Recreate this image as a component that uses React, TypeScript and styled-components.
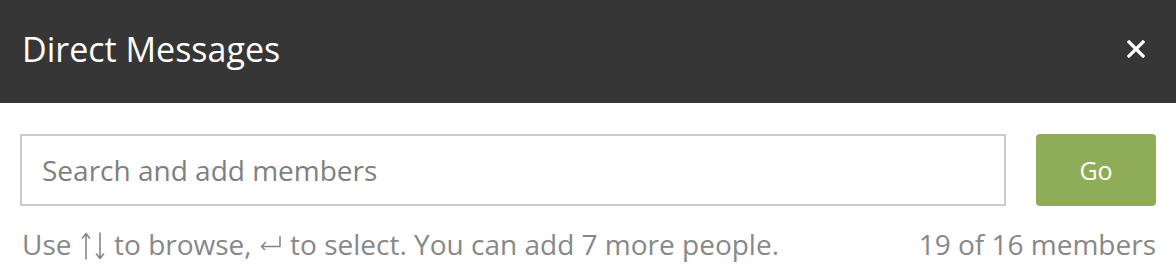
import React from 'react';
import styled, { createGlobalStyle } from 'styled-components';

const GlobalStyle = createGlobalStyle`
  html, body {
    margin: 0;
    padding: 0;
    background: #ffffff;
    font-family: "Open Sans", "Noto Sans", sans-serif;
  }
`;

const Modal = styled.div`
  width: 1176px;
  height: 278px;
  display: flex;
  flex-direction: column;
  background: #ffffff;
  overflow: hidden;
`;

const Header = styled.header`
  height: 103px;
  box-sizing: border-box;
  padding: 0 31px 5px 22px;
  display: flex;
  align-items: center;
  justify-content: space-between;
  background: #363636;
`;

const Title = styled.h1`
  margin: 0;
  font-size: 34px;
  font-weight: 400;
  color: #ffffff;
`;

const CloseButton = styled.button`
  width: 18px;
  height: 18px;
  padding: 0;
  border: 0;
  background: none;
  cursor: pointer;
  display: flex;
`;

const Body = styled.div`
  padding: 31px 20px 0 20px;
  display: flex;
  flex-direction: column;
`;

const SearchRow = styled.div`
  display: flex;
  gap: 30px;
`;

const SearchInput = styled.input`
  flex: 1;
  height: 72px;
  box-sizing: border-box;
  padding: 0 20px;
  border: 2px solid #cccccc;
  border-radius: 0;
  font-family: inherit;
  font-size: 28px;
  color: #333333;
  outline: none;

  &::placeholder {
    color: #7f7f7f;
  }
`;

const GoButton = styled.button`
  width: 120px;
  height: 72px;
  border: 0;
  border-radius: 4px;
  background: #8fad58;
  color: #ffffff;
  font-family: inherit;
  font-size: 25px;
  cursor: pointer;
`;

const Hint = styled.div`
  margin-top: 19px;
  padding: 0 0 0 2px;
  display: flex;
  justify-content: space-between;
  font-size: 28px;
  line-height: 38px;
  color: #888888;
`;

const KeyIcon = styled.svg<{ $drop: number }>`
  display: inline-block;
  vertical-align: ${({ $drop }) => `${-$drop}px`};
  fill: none;
  stroke: #888888;
  stroke-width: 1.6;
  stroke-linecap: round;
  stroke-linejoin: round;
`;

const UpDown = () => (
  <KeyIcon $drop={5} width="28" height="28" viewBox="0 0 28 28" aria-label="up and down arrows">
    <path d="M7 1.5V27M3.5 6L7 1.5L10.5 6" />
    <path d="M21 1V26.5M17.5 22L21 26.5L24.5 22" />
  </KeyIcon>
);

const Return = () => (
  <KeyIcon $drop={-5} width="24" height="14" viewBox="0 0 24 14" aria-label="enter">
    <path d="M21 0.5V10.5H2.5M6.5 6.5L2.5 10.5L6.5 14.5" />
  </KeyIcon>
);

export default function App() {
  return (
    <Modal>
      <GlobalStyle />
      <Header>
        <Title>Direct Messages</Title>
        <CloseButton aria-label="Close">
          <svg width="18" height="18" viewBox="0 0 18 18">
            <path d="M2 2L16 16M16 2L2 16" stroke="#ffffff" strokeWidth="3.2" strokeLinecap="square" />
          </svg>
        </CloseButton>
      </Header>
      <Body>
        <SearchRow>
          <SearchInput placeholder="Search and add members" />
          <GoButton>Go</GoButton>
        </SearchRow>
        <Hint>
          <span>
            Use <UpDown /> to browse, <Return /> to select. You can add 7 more people.
          </span>
          <span>19 of 16 members</span>
        </Hint>
      </Body>
    </Modal>
  );
}
